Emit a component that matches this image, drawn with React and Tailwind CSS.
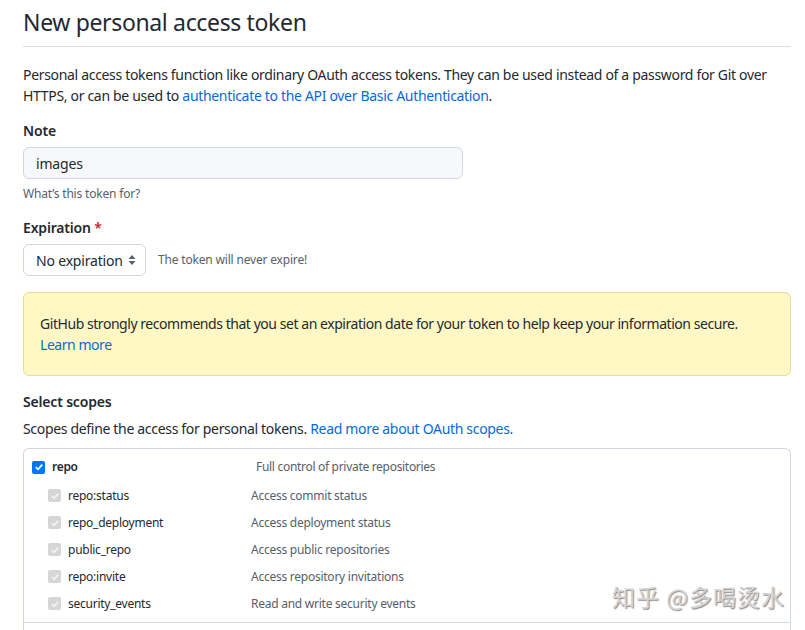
import React from "react";

const font = { fontFamily: '"Noto Sans", "Open Sans", Arial, sans-serif' };

function CheckBox({ disabled }) {
  if (disabled) {
    return (
      <span className="flex h-[13px] w-[13px] items-center justify-center rounded-[2px] bg-[#d6d6d6]">
        <svg width="10" height="10" viewBox="0 0 10 10">
          <path d="M1.8 5.2 4 7.3 8.3 2.6" fill="none" stroke="#f2f2f2" strokeWidth="1.8" />
        </svg>
      </span>
    );
  }
  return (
    <span className="flex h-[13px] w-[13px] items-center justify-center rounded-[2px] bg-[#0075ff]">
      <svg width="10" height="10" viewBox="0 0 10 10">
        <path d="M1.8 5.2 4 7.3 8.3 2.6" fill="none" stroke="#fff" strokeWidth="1.8" />
      </svg>
    </span>
  );
}

const subScopes = [
  ["repo:status", "Access commit status"],
  ["repo_deployment", "Access deployment status"],
  ["public_repo", "Access public repositories"],
  ["repo:invite", "Access repository invitations"],
  ["security_events", "Read and write security events"],
];

export default function App() {
  return (
    <div
      className="relative h-[630px] w-[805px] overflow-hidden bg-white pl-[23px] pr-[14px] text-[#24292f] tracking-[-0.18px]"
      style={font}
    >
      {/* Title */}
      <div className="border-b border-[#d8dee4] pt-[4px] pb-[6px]">
        <h1 className="text-[23px] leading-[36px] font-normal tracking-[-0.35px]">New personal access token</h1>
      </div>

      <div className="mt-[17px] text-[14px] leading-[21px] tracking-[-0.32px]">
        <div>Personal access tokens function like ordinary OAuth access tokens. They can be used instead of a password for Git over</div>
        <div className="flex">
          <span className="whitespace-pre">HTTPS, or can be used to </span>
          <a className="text-[#0969da]">authenticate to the API over Basic Authentication</a>
          <span>.</span>
        </div>
      </div>

      {/* Note */}
      <div className="mt-[14px]">
        <div className="text-[14px] leading-[21px] font-semibold">Note</div>
        <div className="mt-[6px] flex h-[32px] w-[440px] items-center rounded-[6px] border border-[#d0d7de] bg-[#f6f8fa] px-[12px] text-[14px]">
          images
        </div>
        <div className="mt-[6px] text-[12px] leading-[18px] text-[#57606a]">What’s this token for?</div>
      </div>

      {/* Expiration */}
      <div className="mt-[14px]">
        <div className="text-[14px] leading-[21px] font-semibold">
          Expiration <span className="text-[#cf222e]">*</span>
        </div>
        <div className="mt-[6px] flex items-center gap-[12px]">
          <div className="flex h-[32px] w-[123px] items-center justify-between rounded-[6px] border border-[#d0d7de] bg-white pl-[12px] pr-[9px] text-[14px]">
            <span>No expiration</span>
            <svg width="8" height="12" viewBox="0 0 8 12">
              <path d="M4 1 7.5 5H0.5Z M4 11 0.5 7H7.5Z" fill="#57606a" />
            </svg>
          </div>
          <span className="text-[12px] text-[#57606a]">The token will never expire!</span>
        </div>
      </div>

      {/* Warning */}
      <div className="mt-[16px] flex h-[84px] flex-col justify-center rounded-[6px] border border-[#e8dc9a] bg-[#fff8c5] px-[16px] text-[14px] leading-[21px] tracking-[-0.45px]">
        <div>GitHub strongly recommends that you set an expiration date for your token to help keep your information secure.</div>
        <a className="text-[#0969da]">Learn more</a>
      </div>

      {/* Scopes */}
      <div className="mt-[15px] text-[14px] leading-[21px] font-semibold">Select scopes</div>
      <p className="mt-[6px] text-[14px] leading-[21px] tracking-[-0.32px]">
        Scopes define the access for personal tokens. <a className="text-[#0969da]">Read more about OAuth scopes.</a>
      </p>

      <div className="mt-[9px] rounded-t-[6px] border border-b-0 border-[#d0d7de]">
        <div className="flex h-[33px] items-center pt-[3px] pl-[8px] text-[12px] tracking-[-0.3px]">
          <CheckBox />
          <span className="ml-[7px] w-[204px] font-semibold">repo</span>
          <span className="text-[#57606a]">Full control of private repositories</span>
        </div>
        <div className="border-b border-[#d0d7de] pb-[5px]">
          {subScopes.map(([name, desc]) => (
            <div key={name} className="flex h-[27px] items-center pl-[24px] text-[12px] tracking-[-0.25px]">
              <CheckBox disabled />
              <span className="ml-[7px] w-[183px] text-[#24292f]">{name}</span>
              <span className="text-[#57606a]">{desc}</span>
            </div>
          ))}
        </div>
        <div className="h-[20px]" />
      </div>

      {/* Watermark */}
      <div
        className="absolute right-[20px] bottom-[17px] text-[23px] tracking-[1px] text-[#d4d4d4]"
        style={{
          fontFamily: '"Noto Sans CJK SC", sans-serif',
          textShadow: "1px 1px 1px #8a8a8a",
        }}
      >
        知乎 @多喝烫水
      </div>
    </div>
  );
}
